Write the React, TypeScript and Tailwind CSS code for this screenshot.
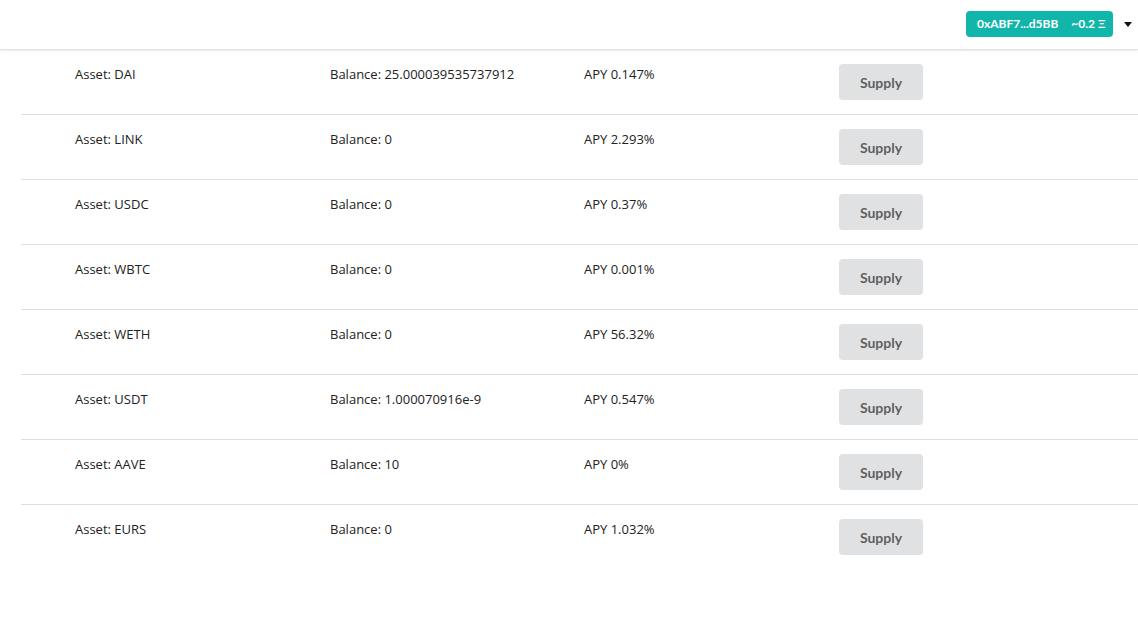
import React from "react";

const rows = [
  ["DAI", "25.000039535737912", "0.147%"],
  ["LINK", "0", "2.293%"],
  ["USDC", "0", "0.37%"],
  ["WBTC", "0", "0.001%"],
  ["WETH", "0", "56.32%"],
  ["USDT", "1.000070916e-9", "0.547%"],
  ["AAVE", "10", "0%"],
  ["EURS", "0", "1.032%"],
];

export default function App() {
  return (
    <div className="min-h-[627px] bg-white text-[13px] text-[#222]" style={{ fontFamily: "'Open Sans', sans-serif" }}>
      <header className="h-[50px] flex items-center justify-end pr-[6px] border-b border-[#e2e2e2] shadow-[0_1px_2px_rgba(0,0,0,0.08)]">
        <div className="flex items-center mb-[1px]">
          <div
            className="h-[26px] w-[147px] rounded-[4px] bg-[#12b5a9] text-white text-[12px] font-bold flex items-center pl-[11px]"
            style={{ fontFamily: "Lato, sans-serif" }}
          >
            <span>0xABF7...d5BB</span>
            <span className="ml-[13px]">~0.2 Ξ</span>
          </div>
          <svg width="8" height="5" viewBox="0 0 8 5" className="ml-[11px]">
            <path d="M0 0 H8 L4 5 Z" fill="#111" />
          </svg>
        </div>
      </header>
      <div className="ml-[21px]">
        {rows.map(([a, b, c], i) => (
          <div
            key={a}
            className={`grid grid-cols-[255px_254px_255px_1fr] pl-[54px] pt-[14px] pb-[14px] ${i < rows.length - 1 ? "border-b border-[#dedede]" : ""}`}
          >
            <div className="leading-[20px]">Asset: {a}</div>
            <div className="leading-[20px]">Balance: {b}</div>
            <div className="leading-[20px]">APY {c}</div>
            <div>
              <button
                className="h-[36px] w-[84px] rounded-[4px] bg-[#e0e1e2] text-[rgba(0,0,0,0.6)] font-bold text-[14px]"
                style={{ fontFamily: "Lato, sans-serif" }}
              >
                Supply
              </button>
            </div>
          </div>
        ))}
      </div>
    </div>
  );
}
